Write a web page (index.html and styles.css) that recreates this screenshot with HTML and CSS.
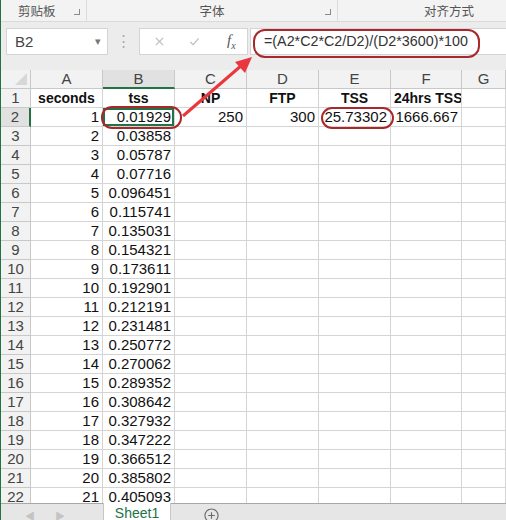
FILE: index.html
```html
<!DOCTYPE html>
<html lang="zh-CN">
<head>
    <meta charset="UTF-8">
    <meta name="viewport" content="width=device-width, initial-scale=1.0">
    <title>TSS - Excel</title>
    <link rel="stylesheet" href="styles.css">
</head>
<body>
    <div class="window">
        <!-- ribbon group captions -->
        <div class="ribbon">
            <div class="group group-clip">
                <span class="group-name">剪贴板</span>
                <span class="launcher"></span>
            </div>
            <div class="group group-font">
                <span class="group-name">字体</span>
                <span class="launcher"></span>
            </div>
            <div class="group group-align">
                <span class="group-name">对齐方式</span>
            </div>
        </div>

        <!-- formula bar -->
        <div class="formula-bar">
            <div class="name-box">
                <span>B2</span>
                <span class="caret">&#9662;</span>
            </div>
            <div class="grip">&#8942;</div>
            <div class="fx-box">
                <svg class="fx-icon" viewBox="0 0 12 12">
                    <path d="M2 2l8 8M10 2l-8 8" stroke="#bdbdbd" stroke-width="1.3" fill="none"/>
                </svg>
                <svg class="fx-icon" viewBox="0 0 12 12">
                    <path d="M1.5 6.5l3 3 6-7" stroke="#bdbdbd" stroke-width="1.3" fill="none"/>
                </svg>
                <span class="fx">f<sub>x</sub></span>
            </div>
            <div class="formula">=(A2*C2*C2/D2)/(D2*3600)*100</div>
        </div>

        <!-- sheet grid -->
        <div class="sheet">
            <div class="grid" id="grid">
                <div class="corner"></div>
                <div class="col-head">A</div>
                <div class="col-head active">B</div>
                <div class="col-head">C</div>
                <div class="col-head">D</div>
                <div class="col-head">E</div>
                <div class="col-head">F</div>
                <div class="col-head">G</div>
            </div>
        </div>

        <!-- sheet tabs -->
        <div class="tabs">
            <div class="tab-nav">
                <span>&#9664;</span>
                <span>&#9654;</span>
            </div>
            <div class="tab">Sheet1</div>
            <div class="add-sheet">
                <svg viewBox="0 0 16 16" width="15" height="15">
                    <circle cx="8" cy="8" r="7" stroke="#6b6b6b" stroke-width="1.2" fill="none"/>
                    <path d="M8 4.5v7M4.5 8h7" stroke="#6b6b6b" stroke-width="1.2"/>
                </svg>
            </div>
        </div>

        <!-- red annotations -->
        <div class="mark mark-b2"></div>
        <div class="mark mark-e2"></div>
        <div class="mark mark-formula"></div>
        <svg class="arrow" viewBox="0 0 90 80" width="90" height="80">
            <path d="M7 64L66 13" stroke="#e8383d" stroke-width="3" fill="none"/>
            <polygon points="76,5 59,10 69,21" fill="#e8383d"/>
        </svg>
    </div>

    <script>
        // Build sheet rows
        var tss = ['0.01929', '0.03858', '0.05787', '0.07716', '0.096451', '0.115741', '0.135031',
            '0.154321', '0.173611', '0.192901', '0.212191', '0.231481', '0.250772', '0.270062',
            '0.289352', '0.308642', '0.327932', '0.347222', '0.366512', '0.385802', '0.405093'];

        var grid = document.getElementById('grid');

        function addCell(text, cls) {
            var div = document.createElement('div');
            div.className = cls;
            div.textContent = text;
            grid.appendChild(div);
        }

        // header row
        addCell('1', 'row-head');
        ['seconds', 'tss', 'NP', 'FTP', 'TSS', '24hrs TSS'].forEach(function (t) {
            addCell(t, 'cell bold');
        });
        addCell('', 'cell');

        for (var i = 0; i < tss.length; i++) {
            var row = i + 2;
            addCell(String(row), row === 2 ? 'row-head active' : 'row-head');
            addCell(String(i + 1), 'cell num');
            addCell(tss[i], row === 2 ? 'cell num selected' : 'cell num');
            if (row === 2) {
                addCell('250', 'cell num');
                addCell('300', 'cell num');
                addCell('25.73302', 'cell num');
                addCell('1666.667', 'cell num');
            } else {
                addCell('', 'cell');
                addCell('', 'cell');
                addCell('', 'cell');
                addCell('', 'cell');
            }
            addCell('', 'cell');
        }
    </script>
</body>
</html>
```

FILE: styles.css
```css
* {
    margin: 0;
    padding: 0;
    box-sizing: border-box;
}

body {
    font-family: 'Liberation Sans', 'Noto Sans CJK SC', sans-serif;
    background: #f3f3f3;
    width: 506px;
    height: 520px;
    overflow: hidden;
}

.window {
    position: relative;
    height: 520px;
    border-left: 1px solid #217346;
}

/* ribbon captions */
.ribbon {
    display: flex;
    height: 22px;
    border-bottom: 1px solid #dadada;
    background: #f3f3f3;
    color: #555;
    font-family: 'Noto Sans CJK SC', sans-serif;
    font-size: 12.5px;
}

.group {
    display: flex;
    align-items: center;
    position: relative;
}

.group-clip {
    width: 86px;
    padding-left: 17px;
    border-right: 1px solid #dcdcdc;
}

.group-font {
    width: 251px;
    justify-content: center;
    border-right: 1px solid #dcdcdc;
}

.group-align {
    flex: 1;
    justify-content: flex-end;
    padding-right: 32px;
}

.launcher {
    position: absolute;
    right: 6px;
    top: 9px;
    width: 6px;
    height: 6px;
    border-left: 1px solid #8a8a8a;
    border-top: 1px solid #8a8a8a;
    transform: scaleX(-1) scaleY(-1);
}

/* formula bar */
.formula-bar {
    display: flex;
    align-items: center;
    height: 48px;
    padding: 0 0 10px 5px;
    background: #ececec;
}

.name-box {
    display: flex;
    align-items: center;
    justify-content: space-between;
    width: 102px;
    height: 27px;
    padding: 0 6px 0 8px;
    background: #fff;
    border: 1px solid #d4d4d4;
    font-size: 15px;
    color: #444;
}

.caret {
    font-size: 11px;
    color: #777;
}

.grip {
    width: 31px;
    text-align: center;
    color: #aaa;
    font-size: 15px;
}

.fx-box {
    display: flex;
    align-items: center;
    width: 109px;
    height: 27px;
    padding: 0 0 0 14px;
    background: #fff;
    border: 1px solid #d4d4d4;
    gap: 24px;
}

.fx-icon {
    width: 11px;
    height: 11px;
}

.fx {
    font-family: 'Liberation Serif', serif;
    font-style: italic;
    font-size: 15px;
    color: #555;
    margin-left: 3px;
}

.fx sub {
    font-size: 10px;
}

.formula {
    flex: 1;
    height: 27px;
    margin-left: 2px;
    padding-left: 13px;
    background: #fff;
    border: 1px solid #d4d4d4;
    border-right: none;
    font-size: 14.3px;
    line-height: 25px;
    color: #333;
}

/* sheet */
.sheet {
    height: 433px;
    overflow: hidden;
    background: #fff;
}

.grid {
    display: grid;
    grid-template-columns: 30px 72px 72px 72px 72px 72px 71px 1fr;
    grid-auto-rows: 19px;
    font-size: 15px;
}

.corner,
.col-head,
.row-head,
.cell {
    border-right: 1px solid #d4d4d4;
    border-bottom: 1px solid #d4d4d4;
    line-height: 18px;
    white-space: nowrap;
    overflow: hidden;
}

.corner {
    position: relative;
    background: #f2f2f2;
    border-color: #c8c8c8;
}

.corner::after {
    content: "";
    position: absolute;
    right: 3px;
    bottom: 3px;
    border-style: solid;
    border-width: 0 0 12px 12px;
    border-color: transparent transparent #d7d7d7 transparent;
}

.col-head {
    background: #f2f2f2;
    text-align: center;
    color: #444;
    border-color: #c8c8c8;
}

.col-head.active {
    background: #e1e1e1;
    border-bottom: 2px solid #217346;
}

.row-head {
    background: #f2f2f2;
    text-align: center;
    color: #444;
    border-color: #c8c8c8;
}

.row-head.active {
    background: #e1e1e1;
    border-right: 2px solid #217346;
}

.cell {
    padding: 0 3px;
    color: #111;
}

.bold {
    font-weight: bold;
    font-size: 14px;
    text-align: center;
}

.num {
    text-align: right;
}

.selected {
    box-shadow: inset 0 0 0 2px #217346;
}

/* sheet tabs */
.tabs {
    display: flex;
    height: 24px;
    background: #e6e6e6;
    border-top: 1px solid #a8a8a8;
}

.tab-nav {
    display: flex;
    width: 102px;
    padding: 4px 0 0 24px;
    gap: 20px;
    color: #c4c4c4;
    font-size: 10px;
}

.tab {
    width: 68px;
    margin-top: -1px;
    padding-top: 2px;
    background: #fff;
    border-left: 1px solid #c6c6c6;
    border-right: 1px solid #c6c6c6;
    text-align: center;
    color: #217346;
    font-size: 14px;
}

.add-sheet {
    padding: 4px 0 0 33px;
}

/* annotations */
.mark {
    position: absolute;
    border: 2px solid #a8282c;
    border-radius: 11px;
}

.mark-b2 {
    left: 100px;
    top: 106px;
    width: 81px;
    height: 23px;
}

.mark-e2 {
    left: 320px;
    top: 107px;
    width: 73px;
    height: 22px;
}

.mark-formula {
    left: 252px;
    top: 29px;
    width: 227px;
    height: 29px;
    border-radius: 12px;
}

.arrow {
    position: absolute;
    left: 175px;
    top: 52px;
}
```
